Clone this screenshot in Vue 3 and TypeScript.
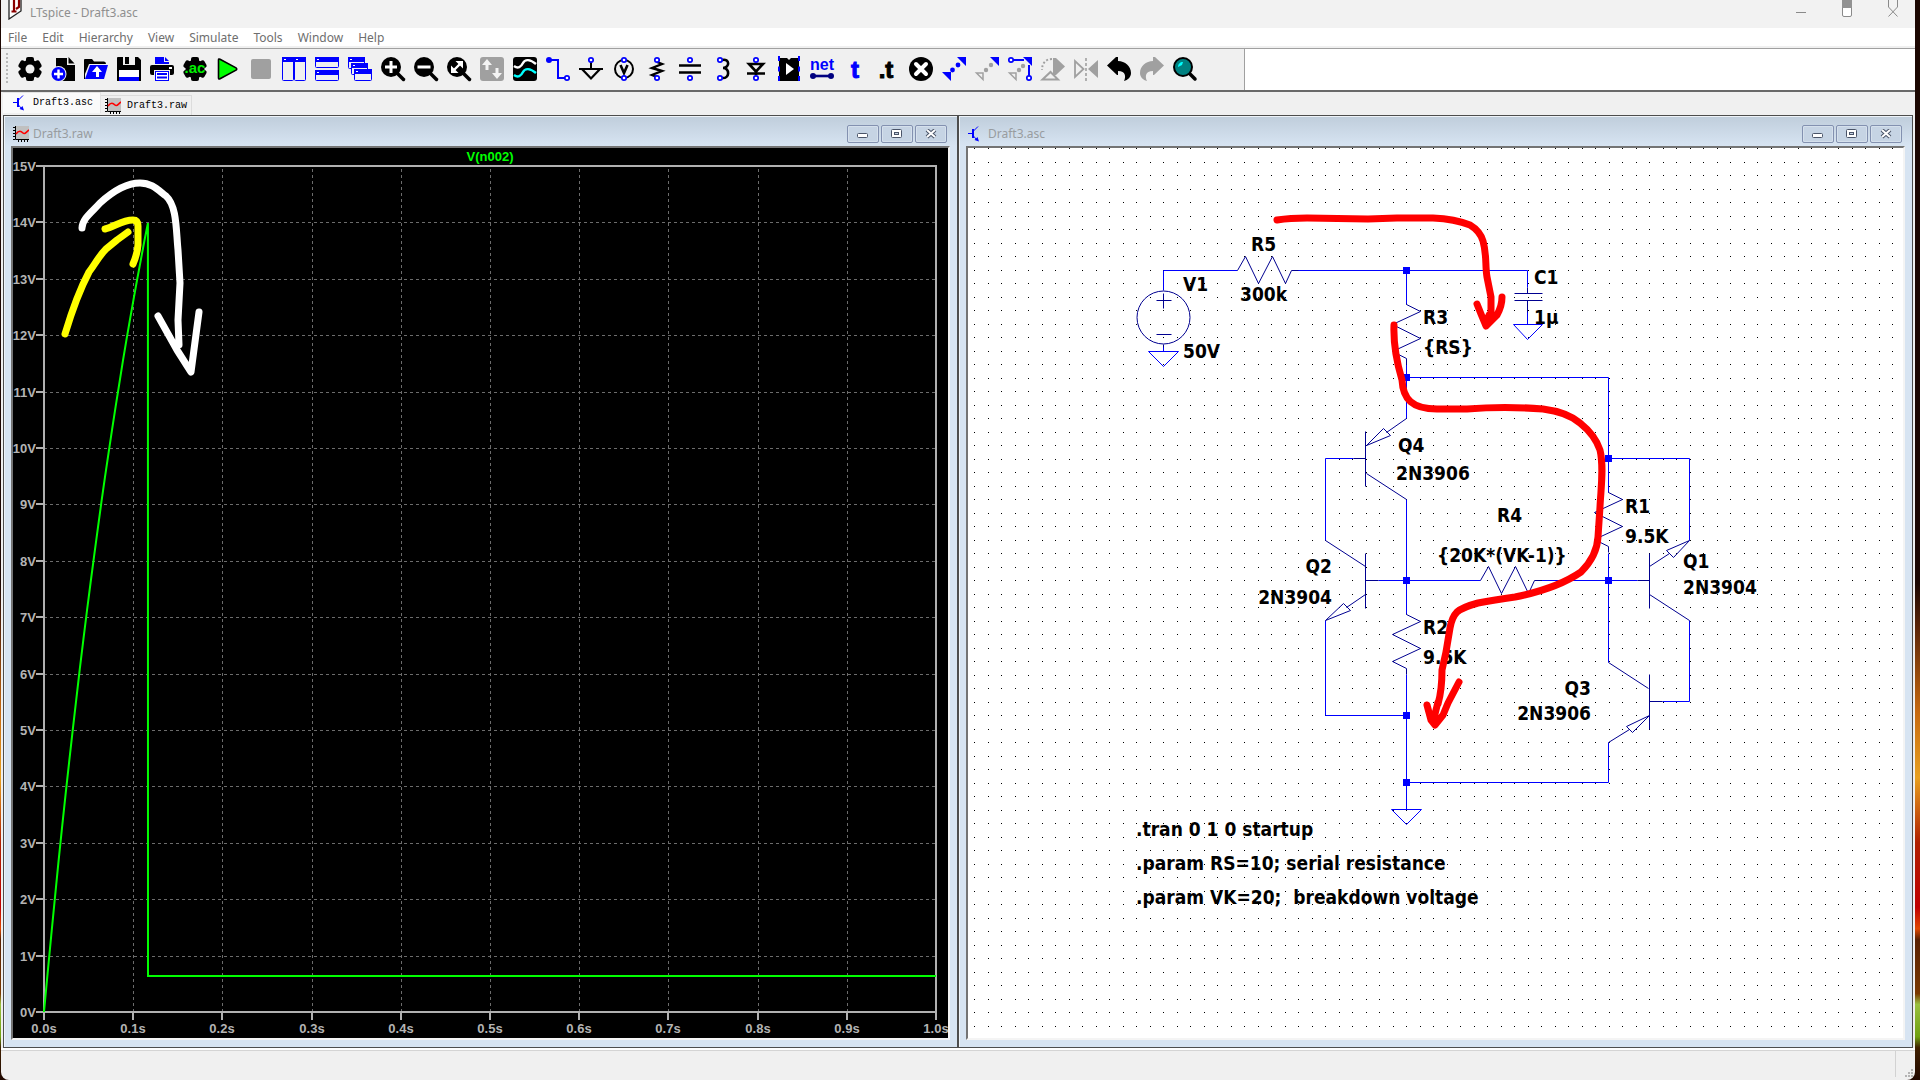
<script setup lang="ts">
interface Tool { label: string; art: string; off?: boolean }
interface Label { x: number; y: number; text: string; end?: boolean }

const menus = ['File', 'Edit', 'Hierarchy', 'View', 'Simulate', 'Tools', 'Window', 'Help']

const teeth = [0, 60, 120].map(a => `<rect x="8" y="0" width="8" height="24" rx="2" transform="rotate(${a} 12 12)"/>`).join('')
const gear = `<circle cx="12" cy="12" r="9.5"/>${teeth}`
const lens = '<path d="M16 16L22.500 22.500" stroke="#000" stroke-width="3.500" stroke-linecap="round"/><circle cx="10" cy="10" r="10"/>'
const pin = (x: number, y: number) => `<circle cx="${x}" cy="${y}" r="2.200" fill="#fff" stroke="#00f" stroke-width="1.700"/>`
const bent = '<path d="M0 8.500L9 0H11V4C18 4 24 9 24 16C24 20 21 23 17 24C19 20 19 14 11 14V18H10Z"/>'
const pane = (x: number, y: number, w: number, h: number) =>
  `<rect x="${x + 0.5}" y="${y + 0.5}" width="${w - 1}" height="${h - 1}" rx="1" fill="#f0f0f0" stroke="#00f"/><rect x="${x}" y="${y}" width="${w}" height="5" fill="#00f"/><rect x="${x + 2}" y="${y + 2}" width="2" height="1" fill="#fff"/>`

const tools: Tool[] = [
  { label: 'Settings', art: `${gear}<circle cx="12" cy="12" r="4.500" fill="#f0f0f0"/>` },
  { label: 'New schematic', art: '<path d="M5 1H16V8H24V24H5Z"/><path d="M17.500 0L23.500 6.500H17.500Z"/><circle cx="7.500" cy="17" r="8" fill="#f0f0f0"/><circle cx="7.500" cy="17" r="7" fill="#00f"/><path d="M7.500 12.500V21.500M3 17H12" stroke="#fff" stroke-width="2.400"/>' },
  { label: 'Open', art: '<path d="M0 22V3Q0 2 1 2H8L10 4.500H20Q22 4.500 22 7H5L1 17V22Z"/><path d="M6 8H24L20 22H1Z" fill="#00f"/><path d="M12 20V15H8L13 9L18 15H15V20Z" fill="#fff"/>' },
  { label: 'Save', art: '<path d="M0 1Q0 0 1 0H21L24 3V24H0Z"/><rect x="6" y="0" width="12" height="8" fill="#f0f0f0"/><rect x="8" y="0" width="4" height="7"/><rect x="2" y="13" width="20" height="8" fill="#fff"/><rect x="2" y="20" width="20" height="4" fill="#00f"/>' },
  { label: 'Print', art: '<path d="M5 7V0H14V5H19V7Z" fill="#00f"/><path d="M15 0L19 4H15Z" fill="#00f"/><rect x="0" y="8" width="24" height="10" rx="2"/><rect x="19" y="10" width="3" height="2" fill="#fff"/><rect x="4" y="13" width="16" height="11" fill="#f0f0f0"/><rect x="5.500" y="14.500" width="13" height="9" fill="#fff" stroke="#00f"/><path d="M7 17H17M7 20.500H17" stroke="#00f" stroke-width="2"/>' },
  { label: 'Configure analysis', art: `${gear}<text x="12" y="16" font-size="15" font-weight="700" text-anchor="middle" fill="#00f000">.ac</text>` },
  { label: 'Run', art: '<path d="M2.500 3V21Q2.500 22.500 4 21.700L20 13.200Q21.500 12 20 10.800L4 2.300Q2.500 1.500 2.500 3Z" fill="#0f0" stroke="#000" stroke-width="1.600"/>' },
  { label: 'Stop', off: true, art: '<rect x="2" y="2" width="20" height="20" rx="2" fill="#a0a0a0"/>' },
  { label: 'Tile vertically', art: pane(0, 0, 12, 24) + pane(12, 0, 12, 24) },
  { label: 'Tile horizontally', art: pane(0, 0, 24, 11) + pane(0, 13, 24, 11) },
  { label: 'Cascade', art: pane(0, 0, 17, 12) + pane(3, 6, 17, 12) + pane(6, 12, 18, 12) },
  { label: 'Zoom in', art: `${lens}<path d="M10 4V16M4 10H16" stroke="#fff" stroke-width="3"/>` },
  { label: 'Zoom out', art: `${lens}<path d="M3.500 10H16.500" stroke="#fff" stroke-width="3"/>` },
  { label: 'Zoom to fit', art: `${lens}<path d="M7 13L13 7" stroke="#fff" stroke-width="2.400"/><path d="M8.500 4H16V11.500ZM4 8.500V16H11.500Z" fill="#fff"/>` },
  { label: 'Autorange', off: true, art: '<rect width="24" height="24" rx="3" fill="#a0a0a0"/><path d="M5.500 13V8H2L7 2L12 8H8.500V13ZM15.500 11V16H12L17 22L22 16H18.500V11Z" fill="#f4f4f4"/>' },
  { label: 'Waveforms', art: '<rect width="24" height="24" rx="3"/><path d="M1 9C5 12 8 10 10 6S17 2 23 7" fill="none" stroke="#fff" stroke-width="2.400"/><path d="M1 18C5 21 8 19 10 15S17 11 23 16" fill="none" stroke="#0ff" stroke-width="2.400"/>' },
  { label: 'Wire', art: `<path d="M3 3H12V21H21" fill="none" stroke="#00f" stroke-width="2"/><circle cx="3" cy="3" r="3" fill="#00f"/>${pin(21, 21)}` },
  { label: 'Ground', art: `<path d="M12 5V12M0 12H24" stroke="#000" stroke-width="2"/><path d="M3 12H21L12 21.500Z" fill="#f0f0f0" stroke="#000" stroke-width="2.200"/>${pin(12, 3)}` },
  { label: 'Voltage source', art: `<circle cx="12" cy="12" r="9" fill="#f0f0f0" stroke="#000" stroke-width="2"/><path d="M8.500 8L12 16L15.500 8" fill="none" stroke="#000" stroke-width="2.600"/>${pin(12, 3)}${pin(12, 21)}` },
  { label: 'Resistor', art: `<path d="M12 5L17 7L7 11L17 14L7 18L12 20" fill="none" stroke="#000" stroke-width="2.400"/>${pin(12, 3)}${pin(12, 21)}` },
  { label: 'Capacitor', art: `<path d="M1 8.500H23M1 15.500H23" stroke="#000" stroke-width="2.600"/>${pin(12, 3)}${pin(12, 21)}` },
  { label: 'Inductor', art: `<path d="M11 3C19 1 19 11 12 11C19 11 19 22 11 21" fill="none" stroke="#000" stroke-width="2.600"/>${pin(9, 3)}${pin(9, 21)}` },
  { label: 'Diode', art: `<path d="M5 7H19L12 14.500Z" fill="none" stroke="#000" stroke-width="2.600"/><path d="M3 16.500H21M12 14V18" stroke="#000" stroke-width="2.600"/>${pin(12, 3)}${pin(12, 21)}` },
  { label: 'Component', art: '<rect x="2" y="1" width="20" height="23" fill="#000"/><path d="M9 6V18L17 12Z" fill="#fff"/><path d="M9 0H15L12 3Z" fill="#f0f0f0"/><path d="M1 1.500H3M1 12H3M1 21.500H3M21 1.500H23M21 12H23M21 21.500H23" stroke="#00f" stroke-width="5"/>' },
  { label: 'Net name', art: '<text x="12" y="13" font-size="16" font-weight="700" text-anchor="middle" fill="#00f">net</text><path d="M2 19H22" stroke="#000080" stroke-width="2.600"/><circle cx="3" cy="19" r="3" fill="#000080"/><circle cx="21" cy="19" r="3" fill="#000080"/>' },
  { label: 'Comment text', art: '<text x="12" y="21" font-size="24" font-weight="700" text-anchor="middle" fill="#00f" stroke="#00f">t</text>' },
  { label: 'SPICE directive', art: '<text x="10" y="21" font-size="24" font-weight="700" text-anchor="middle" stroke="#000">.t</text>' },
  { label: 'Delete', art: '<circle cx="12" cy="12" r="12"/><path d="M7 7L17 17M17 7L7 17" stroke="#fff" stroke-width="4" stroke-linecap="round"/>' },
  { label: 'Move', art: '<path d="M15 0H24V9ZM0 15H9V24Z" fill="#00f"/><circle cx="16" cy="8" r="2.400" fill="#00f"/><circle cx="10.500" cy="13" r="2.400" fill="#00f"/>' },
  { label: 'Copy', art: '<path d="M15 0H24V9Z" fill="#00f"/><path d="M1.500 16H8V22.500Z" fill="none" stroke="#a0a0a0" stroke-width="1.500"/><circle cx="16" cy="8" r="2.200" fill="#a0a0a0"/><circle cx="11" cy="13" r="2.200" fill="#a0a0a0"/>' },
  { label: 'Drag', art: `<path d="M5 3H16" stroke="#00f" stroke-width="2"/><path d="M15 0H24V9Z" fill="#00f"/><path d="M21 8V19" stroke="#00f" stroke-width="2"/><path d="M1.500 16H8V22.500Z" fill="none" stroke="#a0a0a0" stroke-width="1.500"/><circle cx="15" cy="9" r="2.200" fill="#a0a0a0"/><circle cx="11" cy="13" r="2.200" fill="#a0a0a0"/>${pin(3, 3)}${pin(21, 21)}` },
  { label: 'Rotate', off: true, art: '<path d="M12 1H15L24 9.500L15 18H12Z" fill="#a0a0a0"/><path d="M11 2C5 2 1 6 1 13" fill="none" stroke="#a0a0a0" stroke-width="2" stroke-dasharray="2 2"/><path d="M1.500 22.500H17L9.500 15Z" fill="none" stroke="#a0a0a0" stroke-width="2"/>' },
  { label: 'Mirror', off: true, art: '<path d="M1 4V20L9.500 12Z" fill="none" stroke="#a0a0a0" stroke-width="1.800"/><path d="M24 3V21L14 12Z" fill="#a0a0a0"/><path d="M12 1V24" stroke="#a0a0a0" stroke-width="1.600" stroke-dasharray="3 2"/>' },
  { label: 'Undo', art: bent },
  { label: 'Redo', off: true, art: `<g transform="translate(24 0) scale(-1 1)" fill="#a0a0a0">${bent}</g>` },
  { label: 'Search', art: '<path d="M16 16L22 22" stroke="#000" stroke-width="3.500" stroke-linecap="round"/><circle cx="10" cy="10" r="9" fill="#008080" stroke="#000" stroke-width="2"/><path d="M5 10C5 7 7 5 10 5L9 8Z" fill="#0ff"/>' },
]

// Plot frame: x 0..1 s, y 0..15 V
const plot = { left: 31, right: 923, top: 18, bottom: 864 }
const px = (s: number) => Math.round(plot.left + s * (plot.right - plot.left))
const py = (v: number) => Math.round(plot.bottom - v * (plot.bottom - plot.top) / 15)
const volts = Array.from({ length: 16 }, (_, i) => i)
const tenths = Array.from({ length: 11 }, (_, i) => i)
const charge = Array.from({ length: 30 }, (_, i) => {
  const t = 0.1165 * i / 29
  return `${(plot.left + t * 892).toFixed(1)},${(plot.bottom - 25.9 * (1 - Math.exp(-t / 0.15)) * 56.4).toFixed(1)}`
}).join(' ')
const trace = `${charge} 135,828 923,828`

const wires = [
  'M1163 290V270H1237M1297 270H1527V287M1406 270V304M1163 346V351M1527 311V324',
  'M1406 364V418M1406 377H1608V492M1608 458H1689V540M1608 553V662M1353 458H1325V540',
  'M1406 499V614M1378 580H1480M1541 580H1637M1325 620V715H1406M1406 674V809',
  'M1689 620V701H1662M1608 742V782H1406',
].join('')
const resV = (x: number, y: number) => `M${x} ${y - 1}V${y}l14 7l-28 13l28 14l-28 13l14 7v6`
const resH = (x: number, y: number) => `M${x} ${y}l8 -14l13 27l14 -27l13 27l6 -13h7`
const parts = [
  resV(1406, 304), resV(1608, 492), resV(1406, 614), resH(1237, 270), resH(1480, 580),
  'M1156 300H1171M1163 293V308M1156 334H1171M1163 344V347',
  'M1514 293H1542M1514 300H1542M1527 287V293M1527 300V312',
  'M1365 431V486M1353 458H1365M1406 418L1386 432M1366 445L1383 428L1390 435ZM1366 473L1406 499',
  'M1365 553V608M1365 580H1378M1325 540L1365 566M1365 594L1346 607M1325 620L1343 603L1350 610Z',
  'M1649 553V608M1637 580H1649M1649 566L1669 553M1689 540L1666 550L1673 557ZM1649 594L1689 620',
  'M1649 674V729M1649 701H1662M1608 662L1648 688M1649 715L1626 726L1632 732ZM1629 729L1608 742',
].join('')
const grounds = 'M1148 351H1178L1163 366ZM1513 324H1542L1527 339ZM1391 809H1421L1406 824Z'
const joints = [[1406, 270], [1406, 377], [1608, 458], [1406, 580], [1608, 580], [1406, 715], [1406, 782]]

const labels: Label[] = [
  { x: 1251, y: 251, text: 'R5' }, { x: 1240, y: 301, text: '300k' },
  { x: 1183, y: 291, text: 'V1' }, { x: 1183, y: 358, text: '50V' },
  { x: 1423, y: 324, text: 'R3' }, { x: 1423, y: 354, text: '{RS}' },
  { x: 1534, y: 284, text: 'C1' }, { x: 1534, y: 324, text: '1µ' },
  { x: 1398, y: 452, text: 'Q4' }, { x: 1396, y: 480, text: '2N3906' },
  { x: 1497, y: 522, text: 'R4' }, { x: 1437, y: 562, text: '{20K*(VK-1)}' },
  { x: 1625, y: 513, text: 'R1' }, { x: 1625, y: 543, text: '9.5K' },
  { x: 1683, y: 568, text: 'Q1' }, { x: 1683, y: 594, text: '2N3904' },
  { x: 1332, y: 573, text: 'Q2', end: true }, { x: 1332, y: 604, text: '2N3904', end: true },
  { x: 1423, y: 634, text: 'R2' }, { x: 1423, y: 664, text: '9.5K' },
  { x: 1591, y: 695, text: 'Q3', end: true }, { x: 1591, y: 720, text: '2N3906', end: true },
  { x: 1136, y: 836, text: '.tran 0 1 0 startup' },
  { x: 1136, y: 870, text: '.param RS=10; serial resistance' },
  { x: 1136, y: 904, text: '.param VK=20;\u00a0 breakdown voltage' },
]

const plotIcon = '<rect x="2" width="14" height="13" fill="#c0c0c0"/><path d="M2.500 0V13.500H16" fill="none" stroke="#000"/><path d="M0 1.500H2M0 4.500H2M0 7.500H2M0 10.500H2M0 13.500H2M5.500 14V16M8.500 14V16M11.500 14V16M14.500 14V16" stroke="#000"/><path d="M3 8C6 4 8 5 10 7S13 6 16 4" fill="none" stroke="#f00" stroke-width="1.600"/>'
const bjtIcon = '<path d="M5 3V12" stroke="#00f" stroke-width="2"/><path d="M0 7.500H5M5 5.500L10 0.500M5 9.500L9 14" stroke="#00f"/><path d="M11 15.500L6.500 14L9.500 11Z" fill="#00f"/>'
const windows = [
  { id: 'raw', title: 'Draft3.raw', icon: plotIcon },
  { id: 'asc', title: 'Draft3.asc', icon: bjtIcon },
]
const tabs = [
  { title: 'Draft3.asc', icon: bjtIcon, active: true },
  { title: 'Draft3.raw', icon: plotIcon, active: false },
]
</script>

<template>
  <div class="desktop">
    <div class="app">
      <header class="titlebar">
        <svg class="logo" width="16" height="20" viewBox="0 0 16 20"><path d="M1 0V19L13 11V0" fill="#fff" stroke="#222" stroke-width="1.300" /><path d="M6 0V11M3.500 11.500H8.500M11 0V7L8 9" fill="none" stroke="#8b0000" stroke-width="2.200" /></svg>
        <span class="caption">LTspice - Draft3.asc</span>
        <div class="controls">
          <button aria-label="Minimize"><svg width="12" height="20"><path d="M1 12.500H11" stroke="#8a8a8a" /></svg></button>
          <button aria-label="Maximize"><svg width="12" height="20"><rect x="1" width="10" height="8" fill="#929292" /><path d="M1.500 8V15Q1.500 16.500 3 16.500H9Q10.500 16.500 10.500 15V8" fill="#fff" stroke="#8a8a8a" /></svg></button>
          <button aria-label="Close"><svg width="12" height="20"><path d="M1.500 0V7L10.500 16.500M10.500 0V7L1.500 16.500" fill="none" stroke="#8a8a8a" /></svg></button>
        </div>
      </header>

      <nav class="menubar">
        <button v-for="m in menus" :key="m">{{ m }}</button>
      </nav>

      <div class="toolrow">
        <div class="toolbar">
          <span class="grip"></span>
          <button v-for="t in tools" :key="t.label" :aria-label="t.label" :disabled="t.off">
            <svg width="24" height="24" viewBox="0 0 24 24" v-html="t.art"></svg>
          </button>
        </div>
      </div>

      <div class="tabs">
        <button v-for="t in tabs" :key="t.title" :class="{ active: t.active }">
          <svg width="16" height="16" viewBox="0 0 16 16" v-html="t.icon"></svg>{{ t.title }}
        </button>
      </div>

      <main class="mdi">
        <section v-for="w in windows" :key="w.id" class="child">
          <div class="child-bar">
            <svg width="16" height="16" viewBox="0 0 16 16" v-html="w.icon"></svg>
            <span>{{ w.title }}</span>
            <div class="child-controls">
              <button aria-label="Minimize"><svg width="12" height="10"><rect x="0.500" y="4.500" width="10" height="4" rx="1" fill="#fff" stroke="#4a5468" /></svg></button>
              <button aria-label="Restore"><svg width="12" height="10"><rect x="0.500" y="0.500" width="10" height="8" rx="1" fill="#fff" stroke="#4a5468" /><rect x="3.500" y="3.500" width="4" height="2" fill="#c5d2e2" stroke="#4a5468" /></svg></button>
              <button aria-label="Close"><svg width="12" height="10"><path d="M2 1L10 8M10 1L2 8" stroke="#4a5468" stroke-width="4" /><path d="M2 1L10 8M10 1L2 8" stroke="#fff" stroke-width="2" /></svg></button>
            </div>
          </div>

          <div class="client" :class="w.id">
            <svg v-if="w.id === 'raw'" class="canvas axis" width="100%" height="100%">
              <g class="grid">
                <path v-for="i in 14" :key="'h' + i" :d="`M31 ${py(i)}.5H923`" />
                <path v-for="i in 9" :key="'v' + i" :d="`M${px(i / 10)}.5 864V18`" />
              </g>
              <rect x="31" y="18" width="892" height="846" class="frame" />
              <path v-for="v in volts" :key="'vt' + v" :d="`M23 ${py(v)}H31`" class="frame" />
              <path v-for="s in tenths" :key="'st' + s" :d="`M${px(s / 10)} 864V872`" class="frame" />
              <text v-for="v in volts" :key="'vl' + v" x="23" :y="py(v) + 5" text-anchor="end">{{ v }}V</text>
              <text v-for="s in tenths" :key="'sl' + s" :x="px(s / 10)" y="885" text-anchor="middle">{{ (s / 10).toFixed(1) }}s</text>
              <polyline :points="trace" class="trace" />
              <text x="477" y="13" text-anchor="middle" class="name">V(n002)</text>
              <g transform="translate(-13 -148)" class="ink">
                <path stroke="#ff0" d="M65 334C71 314 80 289 89 272C95 264 99 256 106 249L117 240L128 232M105 229C114 227 122 220 133 220Q138 220 138 226V245Q137 255 133 264" />
                <path stroke="#fff" d="M82 228C82 219 92 212 100 203C112 192 126 183 140 183C152 183 158 190 166 196C177 206 176 230 178 250L180 283L178 320L179 345M158 316L177 350L191 372L199 312" />
              </g>
            </svg>

            <svg v-else class="canvas" width="100%" height="100%">
              <defs>
                <pattern id="dots" x="6" y="0" width="27" height="27" patternUnits="userSpaceOnUse">
                  <path d="M0 0h1v1h-1zM14 0h1v1h-1zM0 14h1v1h-1zM14 14h1v1h-1z" />
                </pattern>
              </defs>
              <rect width="100%" height="100%" fill="url(#dots)" />
              <g transform="translate(-968 -148)">
                <g transform="translate(0.5 0.5)" fill="none">
                  <path :d="wires" stroke="#00f" />
                  <path :d="parts" stroke="#000090" />
                  <circle cx="1163" cy="317" r="26.500" stroke="#000090" />
                  <path :d="grounds" stroke="#00f" />
                </g>
                <rect v-for="(j, i) in joints" :key="i" :x="j[0] - 3" :y="j[1] - 3" width="7" height="7" fill="#00f" />
                <text v-for="(l, i) in labels" :key="'l' + i" :x="l.x" :y="l.y" :text-anchor="l.end ? 'end' : 'start'" class="net">{{ l.text }}</text>
                <g class="ink" stroke="#f00">
                  <path d="M1277 220Q1290 218 1307 218L1368 219L1397 218H1433Q1455 219 1470 225Q1480 231 1483 241C1487 255 1485 266 1487 277L1491 297V315M1477 304L1481 314L1486 326L1497 315Q1502 306 1502 297M1489 315L1486 324" />
                  <path d="M1394 325Q1393 350 1402 380C1403 399 1412 409 1437 409H1467Q1505 406 1543 409Q1567 412 1580 423Q1595 435 1600 450C1604 467 1601 487 1600 507L1598 537Q1597 556 1581 572C1562 585 1540 592 1515 597Q1494 600 1478 603Q1463 607 1457 612Q1452 617 1450 628L1446 652L1442 670Q1442 690 1438 704M1427 705L1431 720L1435 725L1443 715L1448 703L1459 682M1438 702L1434 718" />
                </g>
              </g>
            </svg>
          </div>
        </section>
      </main>

      <footer class="status">
        <span class="pane"></span>
        <svg class="sizer" width="10" height="10"><path d="M6 0h2v2h-2zM3 3h2v2h-2zM6 3h2v2h-2zM0 6h2v2h-2zM3 6h2v2h-2zM6 6h2v2h-2z" fill="#b4b4b4" /></svg>
      </footer>
    </div>
  </div>
</template>

<style>
body { margin: 0; }
</style>

<style scoped>
* { box-sizing: border-box; }
button { border: 0; padding: 0; margin: 0; background: none; font: inherit; color: inherit; }
svg { display: block; flex: none; }

.desktop {
  min-height: 100vh;
  display: flex;
  padding: 0 5px 0 1px;
  background: linear-gradient(#1c0702 0 54%, #5a2408 58%, #c86a10 66%, #e8a020 72%, #b02000 78%, #c00000 84%, #e04800 86%, #5a2000 87%, #7a3800 92%, #9ac040 93%, #70a010 96%, #402000 97%, #200800);
}
.app {
  flex: 1;
  min-width: 0;
  display: flex;
  flex-direction: column;
  background: #f0f0f0;
  border-radius: 0 0 8px 8px;
  overflow: hidden;
  font: 12px/16px "Noto Sans", "Open Sans", sans-serif;
}

.titlebar { height: 28px; display: flex; align-items: flex-start; padding-left: 7px; background: #f2f2f2; color: #8f8f8f; }
.caption { margin: 5px 0 0 6px; }
.controls { margin-left: auto; display: flex; gap: 34px; padding-right: 16px; }

.menubar { height: 20px; display: flex; align-items: flex-start; gap: 15px; padding: 2px 7px 0; background: #fff; border-bottom: 2px solid #f0f0f0; color: #6e6e6e; }

.toolrow { border-top: 1px solid #a0a0a0; border-bottom: 2px solid #696969; background: #fff; }
.toolbar { width: max-content; height: 41px; display: flex; align-items: center; padding: 0 43px 2px 5px; background: #f0f0f0; border-right: 1px solid #a0a0a0; font-family: "Liberation Sans", sans-serif; }
.toolbar button { width: 33px; height: 33px; display: flex; align-items: center; justify-content: center; }
.toolbar button svg { overflow: visible; }
.grip { width: 2px; height: 32px; margin-right: 5px; background: repeating-linear-gradient(#b8b8b8 0 2px, #f0f0f0 2px 4px); }

.tabs { height: 23px; display: flex; align-items: flex-start; padding-left: 2px; font: 10px/16px "Liberation Mono", monospace; color: #000; }
.tabs button { height: 20px; margin-top: 3px; display: flex; align-items: center; gap: 6px; padding: 0 4px; border: 1px solid #dcdcdc; border-width: 1px 1px 0 0; }
.tabs button.active { height: 21px; margin-top: 0; gap: 4px; padding: 0 7px 0 10px; background: #fafafa; border-color: #e4e4e4; }

.mdi { flex: 1; display: flex; padding: 0 2px; }
.child { flex: 1; min-width: 0; display: flex; flex-direction: column; padding: 0 7px 7px; border: 1px solid #4d4d4d; background: linear-gradient(#bfcddb, #d7e4f2 30px); box-shadow: inset 1px 1px 0 #eef3f8; }
.child-bar { height: 30px; display: flex; align-items: center; gap: 4px; padding: 6px 0 0 2px; color: #989ca0; }
.child-controls { margin-left: auto; display: flex; gap: 2px; padding-right: 3px; }
.child-controls button { width: 32px; height: 18px; display: flex; align-items: center; justify-content: center; border: 1px solid #8391b0; border-radius: 2px; background: #c6d4e4; box-shadow: inset 0 0 0 1px #d5e0ec; }
.client { flex: 1; min-height: 800px; position: relative; border: 2px solid; border-color: #747474 #f4f4f4 #f4f4f4 #747474; background: #fff; overflow: hidden; }
.client.raw { background: #000; }
.canvas { position: absolute; inset: 0; }

.axis text { font: 700 13px "Liberation Sans", sans-serif; fill: #b4b4b4; }
.axis .name { fill: #0f0; }
.grid { fill: none; stroke: #6c6c6c; stroke-dasharray: 3 3; }
.frame { fill: none; stroke: #b0b0b0; stroke-width: 2; }
.trace { fill: none; stroke: #0f0; stroke-width: 2; }
.ink { fill: none; stroke-width: 7; stroke-linecap: round; stroke-linejoin: round; }
.net { font: 700 19px "DejaVu Sans Condensed", "DejaVu Sans", sans-serif; white-space: pre; }

.status { height: 32px; display: flex; align-items: flex-end; justify-content: flex-end; border-top: 2px solid #fff; box-shadow: inset 0 1px 0 #d4d4d4; }
.pane { width: 1px; height: 26px; margin: 0 9px 3px 0; background: #d2d2d2; }
.sizer { margin-bottom: 1px; }
</style>
